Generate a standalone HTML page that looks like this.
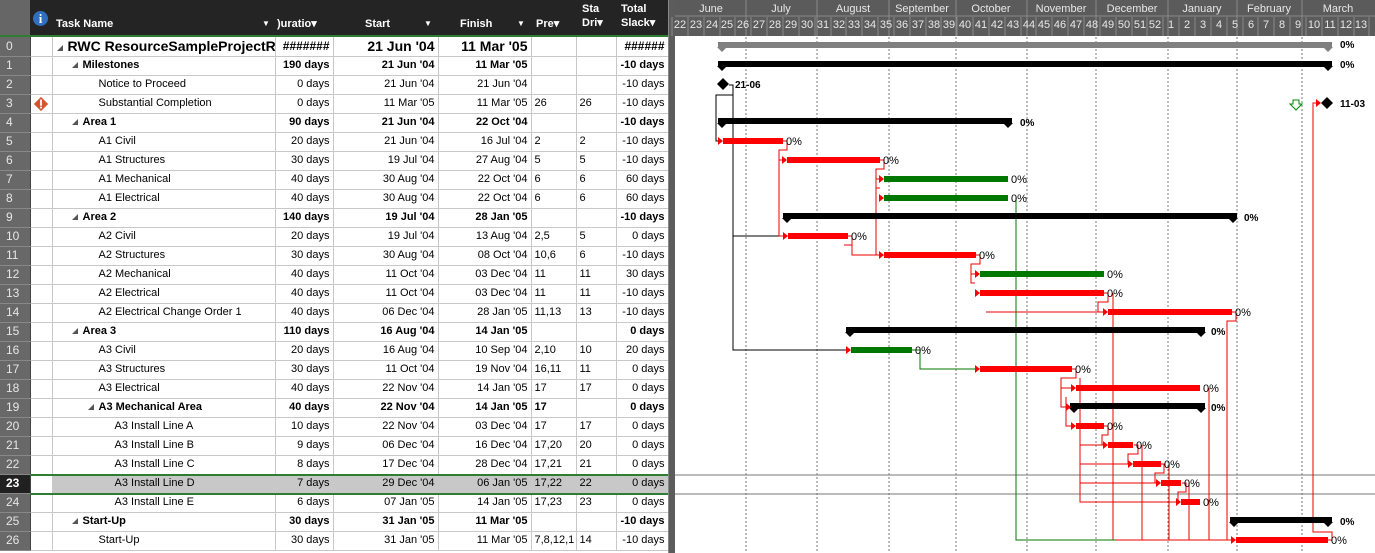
<!DOCTYPE html>
<html><head><meta charset="utf-8">
<style>
*{margin:0;padding:0;box-sizing:border-box}
body{width:1375px;height:553px;overflow:hidden;background:#fff;font-family:"Liberation Sans",Arial,sans-serif;font-size:11px;color:#000;position:relative}
#hdr{position:absolute;left:0;top:0;width:668px;height:37px;background:#242424;border-bottom:2px solid #2e7d32}
#hdr div{position:absolute;color:#fff;font-weight:bold;font-size:11px;bottom:5px}
table{position:absolute;left:0;top:37px;border-collapse:collapse;table-layout:fixed;width:668px}
tr{height:19px}
td{height:19px;border-bottom:1px solid #c8c8c8;border-right:1px solid #c8c8c8;white-space:nowrap;overflow:hidden;padding:0 3px;line-height:17px;vertical-align:middle}
td.n{background:#686868;color:#e6e6e6;font-size:12px;padding-left:6px;border-bottom:1px solid #888;border-right:1px solid #444}
td.r{text-align:right}
tr.b td{font-weight:bold}
tr.b td.n{font-weight:normal}
.c{display:inline-block;width:0;height:0;border-left:6px solid transparent;border-bottom:6px solid #555;margin-right:5px;vertical-align:0}
tr.sel td{background:#c8c8c8}
tr.sel td.n{background:#202020;color:#fff;font-weight:bold}
tr.sel td.i{background:#fff}
#selbox{position:absolute;left:30px;top:474px;width:638px;height:21px;border-top:2px solid #2e7d32;border-bottom:2px solid #2e7d32}
#sep{position:absolute;left:668px;top:0;width:7px;height:553px;background:#5c5c5c;border-left:1px solid #888}
</style></head><body>
<div id="hdr">
<div style="left:0;top:0;bottom:0;width:30px;background:#666"></div>
<div style="left:33px;top:11px;width:15px;height:15px;border-radius:50%;background:#2f6fbf;text-align:center;line-height:15px;font-family:'Liberation Serif',serif;font-size:13px">i</div>
<div style="left:56px">Task Name</div><div style="left:262px;font-size:8px;bottom:7px">▼</div>
<div style="left:277px">)uratio▾</div>
<div style="left:365px">Start</div><div style="left:424px;font-size:8px;bottom:7px">▼</div>
<div style="left:460px">Finish</div><div style="left:517px;font-size:8px;bottom:7px">▼</div>
<div style="left:536px">Pre▾</div>
<div style="left:582px;line-height:14px">Sta<br>Dri▾</div>
<div style="left:621px;line-height:14px">Total<br>Slack▾</div>
</div>
<table>
<colgroup><col style="width:30px"><col style="width:22px"><col style="width:223px"><col style="width:58px"><col style="width:105px"><col style="width:93px"><col style="width:45px"><col style="width:40px"><col style="width:52px"></colgroup>
<tr class="b"><td class="n">0</td><td class="i"></td><td style="padding-left:4px;font-size:14px;line-height:17px"><span class="c"></span>RWC ResourceSampleProjectR0</td><td class="r" style="font-size:12px">#######</td><td class="r" style="font-size:14px">21 Jun '04</td><td class="r" style="font-size:14px">11 Mar '05</td><td></td><td></td><td class="r" style="font-size:12px">######</td></tr>
<tr class="b"><td class="n">1</td><td></td><td style="padding-left:19px"><span class="c"></span>Milestones</td><td class="r">190 days</td><td class="r">21 Jun '04</td><td class="r">11 Mar '05</td><td></td><td></td><td class="r">-10 days</td></tr>
<tr><td class="n">2</td><td></td><td style="padding-left:46px">Notice to Proceed</td><td class="r">0 days</td><td class="r">21 Jun '04</td><td class="r">21 Jun '04</td><td></td><td></td><td class="r">-10 days</td></tr>
<tr><td class="n">3</td><td style="padding:0 2px;line-height:0"><svg width="16" height="16" viewBox="0 0 18 18" style="display:block"><path d="M9 1L17 9L9 17L1 9Z" fill="#d9532c"/><rect x="8" y="4" width="2" height="7" fill="#fff"/><rect x="8" y="12" width="2" height="2" fill="#fff"/></svg></td><td style="padding-left:46px">Substantial Completion</td><td class="r">0 days</td><td class="r">11 Mar '05</td><td class="r">11 Mar '05</td><td>26</td><td>26</td><td class="r">-10 days</td></tr>
<tr class="b"><td class="n">4</td><td></td><td style="padding-left:19px"><span class="c"></span>Area 1</td><td class="r">90 days</td><td class="r">21 Jun '04</td><td class="r">22 Oct '04</td><td></td><td></td><td class="r">-10 days</td></tr>
<tr><td class="n">5</td><td></td><td style="padding-left:46px">A1 Civil</td><td class="r">20 days</td><td class="r">21 Jun '04</td><td class="r">16 Jul '04</td><td>2</td><td>2</td><td class="r">-10 days</td></tr>
<tr><td class="n">6</td><td></td><td style="padding-left:46px">A1 Structures</td><td class="r">30 days</td><td class="r">19 Jul '04</td><td class="r">27 Aug '04</td><td>5</td><td>5</td><td class="r">-10 days</td></tr>
<tr><td class="n">7</td><td></td><td style="padding-left:46px">A1 Mechanical</td><td class="r">40 days</td><td class="r">30 Aug '04</td><td class="r">22 Oct '04</td><td>6</td><td>6</td><td class="r">60 days</td></tr>
<tr><td class="n">8</td><td></td><td style="padding-left:46px">A1 Electrical</td><td class="r">40 days</td><td class="r">30 Aug '04</td><td class="r">22 Oct '04</td><td>6</td><td>6</td><td class="r">60 days</td></tr>
<tr class="b"><td class="n">9</td><td></td><td style="padding-left:19px"><span class="c"></span>Area 2</td><td class="r">140 days</td><td class="r">19 Jul '04</td><td class="r">28 Jan '05</td><td></td><td></td><td class="r">-10 days</td></tr>
<tr><td class="n">10</td><td></td><td style="padding-left:46px">A2 Civil</td><td class="r">20 days</td><td class="r">19 Jul '04</td><td class="r">13 Aug '04</td><td>2,5</td><td>5</td><td class="r">0 days</td></tr>
<tr><td class="n">11</td><td></td><td style="padding-left:46px">A2 Structures</td><td class="r">30 days</td><td class="r">30 Aug '04</td><td class="r">08 Oct '04</td><td>10,6</td><td>6</td><td class="r">-10 days</td></tr>
<tr><td class="n">12</td><td></td><td style="padding-left:46px">A2 Mechanical</td><td class="r">40 days</td><td class="r">11 Oct '04</td><td class="r">03 Dec '04</td><td>11</td><td>11</td><td class="r">30 days</td></tr>
<tr><td class="n">13</td><td></td><td style="padding-left:46px">A2 Electrical</td><td class="r">40 days</td><td class="r">11 Oct '04</td><td class="r">03 Dec '04</td><td>11</td><td>11</td><td class="r">-10 days</td></tr>
<tr><td class="n">14</td><td></td><td style="padding-left:46px">A2 Electrical Change Order 1</td><td class="r">40 days</td><td class="r">06 Dec '04</td><td class="r">28 Jan '05</td><td>11,13</td><td>13</td><td class="r">-10 days</td></tr>
<tr class="b"><td class="n">15</td><td></td><td style="padding-left:19px"><span class="c"></span>Area 3</td><td class="r">110 days</td><td class="r">16 Aug '04</td><td class="r">14 Jan '05</td><td></td><td></td><td class="r">0 days</td></tr>
<tr><td class="n">16</td><td></td><td style="padding-left:46px">A3 Civil</td><td class="r">20 days</td><td class="r">16 Aug '04</td><td class="r">10 Sep '04</td><td>2,10</td><td>10</td><td class="r">20 days</td></tr>
<tr><td class="n">17</td><td></td><td style="padding-left:46px">A3 Structures</td><td class="r">30 days</td><td class="r">11 Oct '04</td><td class="r">19 Nov '04</td><td>16,11</td><td>11</td><td class="r">0 days</td></tr>
<tr><td class="n">18</td><td></td><td style="padding-left:46px">A3 Electrical</td><td class="r">40 days</td><td class="r">22 Nov '04</td><td class="r">14 Jan '05</td><td>17</td><td>17</td><td class="r">0 days</td></tr>
<tr class="b"><td class="n">19</td><td></td><td style="padding-left:35px"><span class="c"></span>A3 Mechanical Area</td><td class="r">40 days</td><td class="r">22 Nov '04</td><td class="r">14 Jan '05</td><td>17</td><td></td><td class="r">0 days</td></tr>
<tr><td class="n">20</td><td></td><td style="padding-left:62px">A3 Install Line A</td><td class="r">10 days</td><td class="r">22 Nov '04</td><td class="r">03 Dec '04</td><td>17</td><td>17</td><td class="r">0 days</td></tr>
<tr><td class="n">21</td><td></td><td style="padding-left:62px">A3 Install Line B</td><td class="r">9 days</td><td class="r">06 Dec '04</td><td class="r">16 Dec '04</td><td>17,20</td><td>20</td><td class="r">0 days</td></tr>
<tr><td class="n">22</td><td></td><td style="padding-left:62px">A3 Install Line C</td><td class="r">8 days</td><td class="r">17 Dec '04</td><td class="r">28 Dec '04</td><td>17,21</td><td>21</td><td class="r">0 days</td></tr>
<tr class="sel"><td class="n">23</td><td class="i"></td><td style="padding-left:62px">A3 Install Line D</td><td class="r">7 days</td><td class="r">29 Dec '04</td><td class="r">06 Jan '05</td><td>17,22</td><td>22</td><td class="r">0 days</td></tr>
<tr><td class="n">24</td><td></td><td style="padding-left:62px">A3 Install Line E</td><td class="r">6 days</td><td class="r">07 Jan '05</td><td class="r">14 Jan '05</td><td>17,23</td><td>23</td><td class="r">0 days</td></tr>
<tr class="b"><td class="n">25</td><td></td><td style="padding-left:19px"><span class="c"></span>Start-Up</td><td class="r">30 days</td><td class="r">31 Jan '05</td><td class="r">11 Mar '05</td><td></td><td></td><td class="r">-10 days</td></tr>
<tr><td class="n">26</td><td></td><td style="padding-left:46px">Start-Up</td><td class="r">30 days</td><td class="r">31 Jan '05</td><td class="r">11 Mar '05</td><td>7,8,12,1</td><td>14</td><td class="r">-10 days</td></tr>
</table>
<div id="selbox"></div>
<div id="sep"></div>
<svg style="position:absolute;left:0;top:0" width="1375" height="553" viewBox="0 0 1375 553" font-family="Liberation Sans, Arial, sans-serif">
<g transform="translate(675,0)">
<rect x="0" y="0" width="700" height="36" fill="#5b5b5b"/>
<line x1="0" y1="16" x2="700" y2="16" stroke="#8a8a8a"/>
<g stroke="#8a8a8a">
<line x1="71" y1="0" x2="71" y2="36"/><line x1="142" y1="0" x2="142" y2="36"/><line x1="214" y1="0" x2="214" y2="36"/><line x1="281" y1="0" x2="281" y2="36"/><line x1="352" y1="0" x2="352" y2="36"/><line x1="421" y1="0" x2="421" y2="36"/><line x1="493" y1="0" x2="493" y2="36"/><line x1="562" y1="0" x2="562" y2="36"/><line x1="627" y1="0" x2="627" y2="36"/>
</g>
<g fill="#e8e8e8" font-size="11" text-anchor="middle">
<text x="36" y="12">June</text><text x="106" y="12">July</text><text x="178" y="12">August</text><text x="247" y="12">September</text><text x="316" y="12">October</text><text x="386" y="12">November</text><text x="457" y="12">December</text><text x="527" y="12">January</text><text x="594" y="12">February</text><text x="663" y="12">March</text>
</g>
<g fill="#e8e8e8" font-size="11" text-anchor="middle">
<text x="5" y="28">22</text><text x="21" y="28">23</text><text x="37" y="28">24</text><text x="52" y="28">25</text><text x="68" y="28">26</text><text x="84" y="28">27</text><text x="100" y="28">28</text><text x="116" y="28">29</text><text x="132" y="28">30</text><text x="148" y="28">31</text><text x="164" y="28">32</text><text x="179" y="28">33</text><text x="195" y="28">34</text><text x="211" y="28">35</text><text x="227" y="28">36</text><text x="243" y="28">37</text><text x="259" y="28">38</text><text x="274" y="28">39</text><text x="290" y="28">40</text><text x="306" y="28">41</text><text x="322" y="28">42</text><text x="338" y="28">43</text><text x="354" y="28">44</text><text x="369" y="28">45</text><text x="385" y="28">46</text><text x="401" y="28">47</text><text x="417" y="28">48</text><text x="433" y="28">49</text><text x="449" y="28">50</text><text x="465" y="28">51</text><text x="480" y="28">52</text><text x="496" y="28">1</text><text x="512" y="28">2</text><text x="528" y="28">3</text><text x="544" y="28">4</text><text x="560" y="28">5</text><text x="576" y="28">6</text><text x="591" y="28">7</text><text x="607" y="28">8</text><text x="623" y="28">9</text><text x="639" y="28">10</text><text x="655" y="28">11</text><text x="671" y="28">12</text><text x="686" y="28">13</text>
</g>
<g stroke="#8a8a8a" stroke-width="1">
<path d="M-3 17v19M13 17v19M29 17v19M45 17v19M60 17v19M76 17v19M92 17v19M108 17v19M124 17v19M140 17v19M156 17v19M171 17v19M187 17v19M203 17v19M219 17v19M235 17v19M251 17v19M266 17v19M282 17v19M298 17v19M314 17v19M330 17v19M346 17v19M361 17v19M377 17v19M393 17v19M409 17v19M425 17v19M441 17v19M457 17v19M472 17v19M488 17v19M504 17v19M520 17v19M536 17v19M552 17v19M568 17v19M583 17v19M599 17v19M615 17v19M631 17v19M647 17v19M663 17v19M679 17v19M694 17v19"/>
</g>
</g>
<g stroke="#777" stroke-dasharray="2,2">
<path d="M746 37V553M817 37V553M889 37V553M956 37V553M1027 37V553M1096 37V553M1168 37V553M1237 37V553M1302 37V553"/>
</g>
<path d="M675 475H1375M675 494H1375" stroke="#777"/>
<g fill="none" stroke="#000" stroke-width="1">
<path d="M729 85h4v10h-17v46h4"/>
<path d="M733 95V350h113M733 236h50"/>
</g>
<g fill="none" stroke="#e00" stroke-width="1">
<path d="M783 141h4v9h-8v10h4M779 150v86h4"/>
<path d="M880 160h4v9h-8v10h4M876 169v19h4M876 188v67h4"/>
<path d="M848 236h4v9h-8M852 245v10h28"/>
<path d="M976 255h4v9h-9v10h4M971 264v19h4"/>
<path d="M1104 293h4v9h-10v10h5"/>
<path d="M986 312h118"/>
<path d="M1072 369h4v9h-15v29h5M1061 378v10h10M1066 397v29h5M1080 378V502h97M1080 445h24M1080 464h50M1080 483h75"/>
<path d="M1104 426h4v9h-6v10h2M1134 445h4v9h-10v10h2M1160 464h4v9h-9v10h2M1182 483h4v9h-8v10h2"/>
<path d="M1113 293V540h121M1142 445V540M1169 464V540M1189 483V540M1209 388V540M1232 312h4v9h-9V540"/>
<path d="M1328 540h4v-8h-19V103h3"/>
</g>
<path d="M1016 198V540h100" fill="none" stroke="#070" stroke-width="1"/>
<path d="M912 350h8v19h55" fill="none" stroke="#070"/>
<g>
<rect x="718" y="42" width="614" height="6" fill="#808080"/>
<path d="M717 47h10l-5 5zM1323 47h10l-5 5z" fill="#808080"/>
<g fill="#000">
<rect x="718" y="61" width="614" height="6"/><path d="M717 66h10l-5 5zM1323 66h10l-5 5z"/>
<rect x="718" y="118" width="294" height="6"/><path d="M717 123h10l-5 5zM1003 123h10l-5 5z"/>
<rect x="783" y="213" width="454" height="6"/><path d="M782 218h10l-5 5zM1228 218h10l-5 5z"/>
<rect x="846" y="327" width="359" height="6"/><path d="M845 332h10l-5 5zM1196 332h10l-5 5z"/>
<rect x="1070" y="403" width="135" height="6"/><path d="M1069 408h10l-5 5zM1196 408h10l-5 5z"/>
<rect x="1230" y="517" width="102" height="6"/><path d="M1229 522h10l-5 5zM1323 522h10l-5 5z"/>
<path d="M723 78l6 6l-6 6l-6-6z"/>
<path d="M1327 97l6 6l-6 6l-6-6z"/>
</g>
<g fill="#f00">
<rect x="723" y="138" width="60" height="6"/>
<rect x="787" y="157" width="93" height="6"/>
<rect x="788" y="233" width="60" height="6"/>
<rect x="884" y="252" width="92" height="6"/>
<rect x="980" y="290" width="124" height="6"/>
<rect x="1108" y="309" width="124" height="6"/>
<rect x="980" y="366" width="92" height="6"/>
<rect x="1076" y="385" width="124" height="6"/>
<rect x="1076" y="423" width="28" height="6"/>
<rect x="1108" y="442" width="25" height="6"/>
<rect x="1133" y="461" width="28" height="6"/>
<rect x="1161" y="480" width="20" height="6"/>
<rect x="1181" y="499" width="19" height="6"/>
<rect x="1236" y="537" width="92" height="6"/>
<path d="M718 137l5 4l-5 4zM782 156l5 4l-5 4zM783 232l5 4l-5 4zM879 175l5 4l-5 4zM879 194l5 4l-5 4zM879 251l5 4l-5 4zM975 270l5 4l-5 4zM975 289l5 4l-5 4zM1103 308l5 4l-5 4zM846 346l5 4l-5 4zM975 365l5 4l-5 4zM1071 384l5 4l-5 4zM1066 403l5 4l-5 4zM1071 422l5 4l-5 4zM1103 441l5 4l-5 4zM1128 460l5 4l-5 4zM1156 479l5 4l-5 4zM1176 498l5 4l-5 4zM1231 536l5 4l-5 4zM1316 99l5 4l-5 4z"/>
</g>
<g fill="#007800">
<rect x="884" y="176" width="124" height="6"/>
<rect x="884" y="195" width="124" height="6"/>
<rect x="980" y="271" width="124" height="6"/>
<rect x="851" y="347" width="61" height="6"/>
</g>
<path d="M1293 100h6v4h3l-6 6l-6-6h3z" fill="#fff" stroke="#080"/>
</g>
<g font-size="10" font-weight="bold" fill="#000">
<text x="1340" y="48">0%</text><text x="1340" y="68">0%</text>
<text x="735" y="88">21-06</text><text x="1340" y="107">11-03</text>
<text x="1020" y="126">0%</text><text x="1244" y="221">0%</text><text x="1211" y="335">0%</text><text x="1211" y="411">0%</text><text x="1340" y="525">0%</text>
</g>
<g font-size="11" fill="#000">
<text x="786" y="145">0%</text><text x="883" y="164">0%</text><text x="1011" y="183">0%</text><text x="1011" y="202">0%</text>
<text x="851" y="240">0%</text><text x="979" y="259">0%</text><text x="1107" y="278">0%</text><text x="1107" y="297">0%</text><text x="1235" y="316">0%</text>
<text x="915" y="354">0%</text><text x="1075" y="373">0%</text><text x="1203" y="392">0%</text>
<text x="1107" y="430">0%</text><text x="1136" y="449">0%</text><text x="1164" y="468">0%</text><text x="1184" y="487">0%</text><text x="1203" y="506">0%</text><text x="1331" y="544">0%</text>
</g>
</svg>
</body></html>
